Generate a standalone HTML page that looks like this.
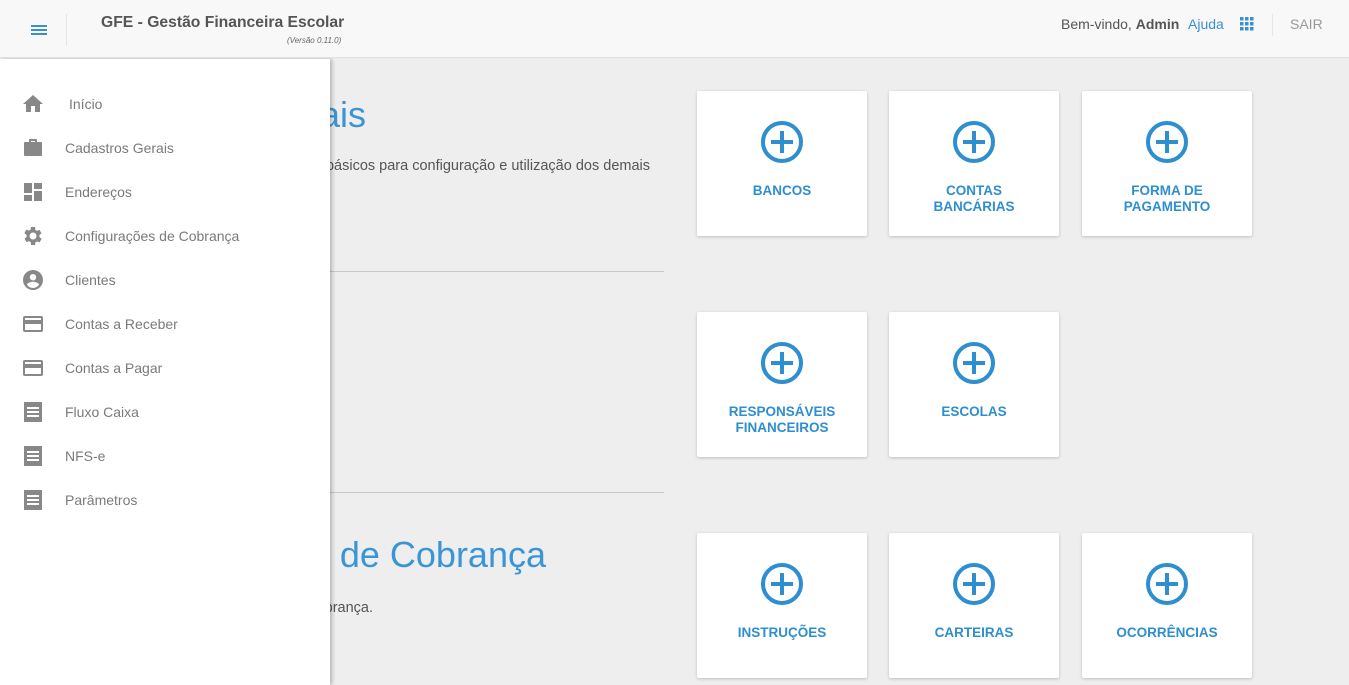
<!DOCTYPE html>
<html><head><meta charset="utf-8"><style>
*{margin:0;padding:0;box-sizing:border-box}
body{width:1349px;height:685px;overflow:hidden;background:#eeeeee;font-family:"Liberation Sans",sans-serif;position:relative}
.hdr{position:absolute;left:0;top:0;width:1349px;height:58px;background:#f8f8f8;border-bottom:1px solid #e0e0e0;z-index:5}
.abs{position:absolute;white-space:nowrap}
.side{position:absolute;left:0;top:59px;width:330px;height:626px;background:#fff;z-index:4;box-shadow:2px 0 4px rgba(0,0,0,.25)}
.item{position:absolute;left:0;height:24px;width:330px}
.item svg{position:absolute;left:21px;top:0}
.item span{position:absolute;left:65px;top:4px;font-size:14px;color:#7a7a7a}
.card{position:absolute;width:170px;height:145px;background:#fff;border-radius:2px;box-shadow:0 1px 3px rgba(0,0,0,.2)}
.card svg{position:absolute;left:63px;top:29px}
.card div{position:absolute;left:0;width:170px;top:92px;text-align:center;color:#2d8ed0;font-size:13.5px;font-weight:bold;line-height:16px}
.big{font-size:36px;color:#3a95d6}
.txt{font-size:14.5px;color:#555}
.line{position:absolute;left:330px;width:334px;height:1px;background:#c8c8c8}
</style></head><body>
<div class="hdr">
 <svg class="abs" style="left:30px;top:23px" width="18" height="14" viewBox="0 0 18 14"><rect x="1" y="2" width="16" height="2" fill="#3a8fd0"/><rect x="1" y="6" width="16" height="2" fill="#3a8fd0"/><rect x="1" y="10" width="16" height="2" fill="#3a8fd0"/></svg>
 <div class="abs" style="left:66px;top:14px;width:1px;height:32px;background:#e6e6e6"></div>
 <div class="abs" style="left:101px;top:14px;font-size:15.7px;font-weight:bold;color:#555">GFE - Gestão Financeira Escolar</div>
 <div class="abs" style="left:287px;top:36px;font-size:8px;font-style:italic;color:#666">(Versão 0.11.0)</div>
 <div class="abs" style="left:1061px;top:16px;font-size:14px;color:#555">Bem-vindo, <b>Admin</b></div>
 <div class="abs" style="left:1188px;top:16px;font-size:14px;color:#3a8fd0">Ajuda</div>
 <svg class="abs" style="left:1240px;top:17px" width="14" height="14" viewBox="0 0 14 14" fill="#3a8fd0"><rect x="0" y="0" width="3.5" height="3.5"/><rect x="5" y="0" width="3.5" height="3.5"/><rect x="10" y="0" width="3.5" height="3.5"/><rect x="0" y="5" width="3.5" height="3.5"/><rect x="5" y="5" width="3.5" height="3.5"/><rect x="10" y="5" width="3.5" height="3.5"/><rect x="0" y="10" width="3.5" height="3.5"/><rect x="5" y="10" width="3.5" height="3.5"/><rect x="10" y="10" width="3.5" height="3.5"/></svg>
 <div class="abs" style="left:1272px;top:14px;width:1px;height:22px;background:#e6e6e6"></div>
 <div class="abs" style="left:1290px;top:16px;font-size:14px;color:#999">SAIR</div>
</div>

<div class="abs big" style="right:983px;top:94px">Cadastros Gerais</div>
<div class="abs txt" style="right:699px;top:158px">Cadastros básicos para configuração e utilização dos demais</div>
<div class="line" style="top:271px"></div>
<div class="line" style="top:492px"></div>
<div class="abs big" style="right:803px;top:534px">Configurações de Cobrança</div>
<div class="abs txt" style="right:976px;top:600px">Configurações de cobrança.</div>

<div class="side">
 <div class="item" style="top:33px"><svg width="24" height="24" viewBox="0 0 24 24" fill="#888"><path d="M10 20v-6h4v6h5v-8h3L12 3 2 12h3v8z"/></svg><span style="left:69px">Início</span></div>
 <div class="item" style="top:77px"><svg width="24" height="24" viewBox="0 0 24 24" fill="#888"><path d="M9 3h6a1 1 0 0 1 1 1v2h4a1 1 0 0 1 1 1v12a1 1 0 0 1-1 1H4a1 1 0 0 1-1-1V7a1 1 0 0 1 1-1h4V4a1 1 0 0 1 1-1zm1 2v1h4V5z"/></svg><span>Cadastros Gerais</span></div>
 <div class="item" style="top:121px"><svg width="24" height="24" viewBox="0 0 24 24" fill="#888"><path d="M3 13h8V3H3zm0 8h8v-6H3zm10 0h8V11h-8zm0-18v6h8V3z"/></svg><span>Endereços</span></div>
 <div class="item" style="top:165px"><svg width="24" height="24" viewBox="0 0 24 24" fill="#888"><path d="M19.4 13a7.5 7.5 0 0 0 0-2l2.1-1.6-2-3.5-2.5 1a7 7 0 0 0-1.7-1L15 3h-4l-.4 2.6a7 7 0 0 0-1.7 1l-2.5-1-2 3.5L6.6 11a7.5 7.5 0 0 0 0 2l-2.1 1.6 2 3.5 2.5-1a7 7 0 0 0 1.7 1L11 21h4l.4-2.6a7 7 0 0 0 1.7-1l2.5 1 2-3.5zM13 15.5a3.5 3.5 0 1 1 0-7 3.5 3.5 0 0 1 0 7z" transform="translate(-1 0)"/></svg><span>Configurações de Cobrança</span></div>
 <div class="item" style="top:209px"><svg width="24" height="24" viewBox="0 0 24 24" fill="#888"><path d="M12 2a10 10 0 1 0 0 20 10 10 0 0 0 0-20zm0 4a3.2 3.2 0 1 1 0 6.4A3.2 3.2 0 0 1 12 6zm0 14a7.5 7.5 0 0 1-6-3.2c0-2 4-3.1 6-3.1s6 1.1 6 3.1A7.5 7.5 0 0 1 12 20z"/></svg><span>Clientes</span></div>
 <div class="item" style="top:253px"><svg width="24" height="24" viewBox="0 0 24 24" fill="#888"><path d="M20 4H4a2 2 0 0 0-2 2v12a2 2 0 0 0 2 2h16a2 2 0 0 0 2-2V6a2 2 0 0 0-2-2zm0 14H4v-6h16zm0-10H4V6h16z"/></svg><span>Contas a Receber</span></div>
 <div class="item" style="top:297px"><svg width="24" height="24" viewBox="0 0 24 24" fill="#888"><path d="M20 4H4a2 2 0 0 0-2 2v12a2 2 0 0 0 2 2h16a2 2 0 0 0 2-2V6a2 2 0 0 0-2-2zm0 14H4v-6h16zm0-10H4V6h16z"/></svg><span>Contas a Pagar</span></div>
 <div class="item" style="top:341px"><svg width="24" height="24" viewBox="0 0 24 24" fill="#888"><path d="M3 2h18v20H3zm3 5v2h12V7zm0 4v2h12v-2zm0 4v2h12v-2z"/></svg><span>Fluxo Caixa</span></div>
 <div class="item" style="top:385px"><svg width="24" height="24" viewBox="0 0 24 24" fill="#888"><path d="M3 2h18v20H3zm3 5v2h12V7zm0 4v2h12v-2zm0 4v2h12v-2z"/></svg><span>NFS-e</span></div>
 <div class="item" style="top:429px"><svg width="24" height="24" viewBox="0 0 24 24" fill="#888"><path d="M3 2h18v20H3zm3 5v2h12V7zm0 4v2h12v-2zm0 4v2h12v-2z"/></svg><span>Parâmetros</span></div>
</div>

<svg width="0" height="0" style="position:absolute"><defs><g id="pl"><circle cx="22" cy="22" r="19" fill="none" stroke="#2d8ed0" stroke-width="4"/><rect x="20" y="11" width="4" height="22" fill="#2d8ed0"/><rect x="11" y="20" width="22" height="4" fill="#2d8ed0"/></g></defs></svg>

<div class="card" style="left:697px;top:91px"><svg width="44" height="44"><use href="#pl"/></svg><div>BANCOS</div></div>
<div class="card" style="left:889px;top:91px"><svg width="44" height="44"><use href="#pl"/></svg><div>CONTAS<br>BANCÁRIAS</div></div>
<div class="card" style="left:1082px;top:91px"><svg width="44" height="44"><use href="#pl"/></svg><div>FORMA DE<br>PAGAMENTO</div></div>
<div class="card" style="left:697px;top:312px"><svg width="44" height="44"><use href="#pl"/></svg><div>RESPONSÁVEIS<br>FINANCEIROS</div></div>
<div class="card" style="left:889px;top:312px"><svg width="44" height="44"><use href="#pl"/></svg><div>ESCOLAS</div></div>
<div class="card" style="left:697px;top:533px"><svg width="44" height="44"><use href="#pl"/></svg><div>INSTRUÇÕES</div></div>
<div class="card" style="left:889px;top:533px"><svg width="44" height="44"><use href="#pl"/></svg><div>CARTEIRAS</div></div>
<div class="card" style="left:1082px;top:533px"><svg width="44" height="44"><use href="#pl"/></svg><div>OCORRÊNCIAS</div></div>
</body></html>
